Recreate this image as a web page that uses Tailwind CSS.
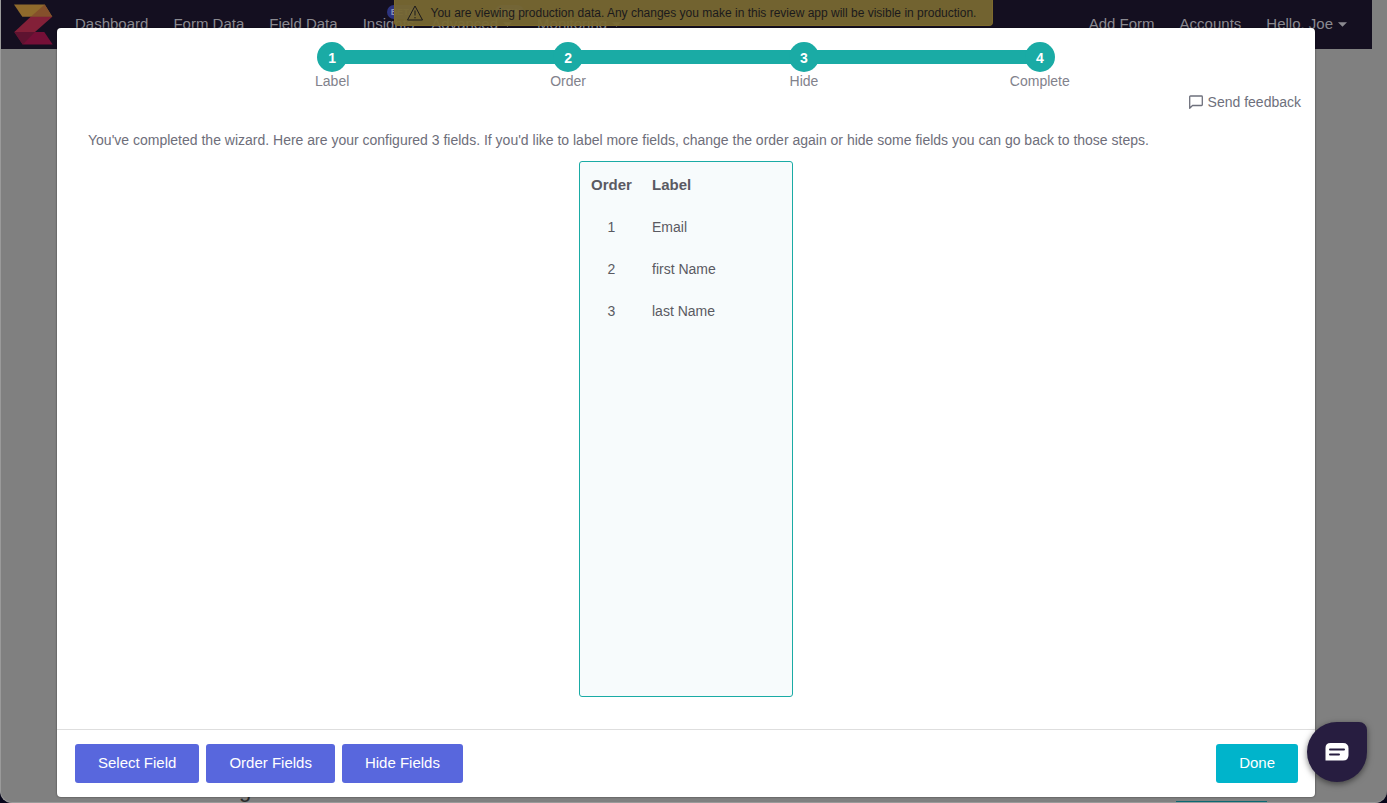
<!DOCTYPE html>
<html lang="en">

<head>
    <meta charset="UTF-8">
    <meta name="viewport" content="width=device-width, initial-scale=1.0">
    <title>Field Wizard</title>
    <script src="https://cdn.jsdelivr.net/npm/@tailwindcss/browser@4"></script>
</head>

<body class="bg-[#07061a] font-['Liberation_Sans',Arial,sans-serif] overflow-hidden">

    <!-- page behind the modal -->
    <div class="relative h-screen overflow-hidden rounded-b-xl border-l border-b border-[#9a9a9a] bg-[#808080] pr-[15px] flex flex-col">
        <nav class="h-[49px] shrink-0 bg-[#140f20] flex items-center justify-between pl-3 pr-[25px] text-[15px] text-[#8b8a90]">
            <div class="flex items-center">
                <a href="#" aria-label="Home" class="mr-[22px]">
                    <svg class="w-10 h-[41px]" viewBox="0 0 40 41">
                        <path d="M1 .5H31.700L39.300 12.700H9.300Z" fill="#8f6a2c" />
                        <path d="M31.700 .5L39.300 12.700H17.700Z" fill="#85502b" />
                        <path d="M17.700 12.700H39.300L22 28H1.300Z" fill="#832038" />
                        <path d="M1.300 28H31.300L39.700 40.500H9.700Z" fill="#750f37" />
                        <path d="M1.300 28H22L9.700 40.500Z" fill="#5e1330" />
                    </svg>
                </a>
                <ul class="flex gap-[25px]">
                    <li><a href="#">Dashboard</a></li>
                    <li><a href="#">Form Data</a></li>
                    <li><a href="#">Field Data</a></li>
                    <li class="relative">
                        <a href="#">Insights</a>
                        <span class="absolute left-6 -top-2 rounded-full bg-[#2d3480] px-1 text-[9px] leading-[14px] font-bold text-[#8b8fb5]">BETA</span>
                    </li>
                    <li class="relative -ml-2">
                        <a href="#" class="flex items-center gap-[5px]">Advanced
                            <svg class="w-[9px] h-[5px]" viewBox="0 0 8 4" fill="currentColor"><path d="M0 0H8L4 4Z" /></svg></a>
                        <span class="absolute left-16 -top-2 rounded-full bg-[#2d3480] px-1 text-[9px] leading-[14px] font-bold text-[#8b8fb5]">NEW</span>
                    </li>
                    <li><a href="#" class="flex items-center gap-[5px]">Monitoring
                            <svg class="w-[9px] h-[5px]" viewBox="0 0 8 4" fill="currentColor"><path d="M0 0H8L4 4Z" /></svg></a></li>
                </ul>
            </div>
            <ul class="flex gap-[25px]">
                <li><a href="#">Add Form</a></li>
                <li><a href="#">Accounts</a></li>
                <li><a href="#" class="flex items-center gap-[5px]">Hello, Joe
                        <svg class="w-[9px] h-[5px]" viewBox="0 0 8 4" fill="currentColor"><path d="M0 0H8L4 4Z" /></svg></a></li>
            </ul>
        </nav>
        <div class="mt-auto flex items-end justify-between pl-[238px] pr-[105px]">
            <p class="text-[22px] leading-6 text-[#2b2b2b]">g</p>
            <div class="h-px w-[91px] bg-[#0b6873]"></div>
        </div>
    </div>

    <!-- production warning -->
    <div class="absolute inset-x-0 top-0 flex justify-center">
        <div class="flex h-[26px] items-center gap-2 rounded-b border border-t-0 border-[#7d6a2c] bg-[#776832]/95 px-3 text-xs text-[#1b1a1c]">
            <svg class="w-4 h-4" viewBox="0 0 16 16" fill="none" stroke="currentColor" stroke-linejoin="round">
                <path d="M8 1L15.500 15H.5Z" />
                <path d="M8 5.500V10.500M8 12V13.300" />
            </svg>
            <p class="pr-1">You are viewing production data. Any changes you make in this review app will be visible in production.</p>
        </div>
    </div>

    <!-- wizard modal -->
    <div class="absolute inset-0 pt-7 pb-[6px] pl-[57px] pr-[72px] flex">
        <div role="dialog" aria-label="Field wizard" class="flex flex-1 flex-col rounded bg-white shadow-[0_0_2px_rgba(0,0,0,0.6)]">
            <ol class="mx-auto mt-[14px] grid w-3/4 grid-cols-4 text-center text-sm leading-[18px] text-[#82828c]">
                <li>
                    <div class="flex items-center">
                        <span class="-mr-1 h-[14px] flex-1"></span>
                        <span class="size-[30px] rounded-full bg-[#1aaba5] pt-px font-bold leading-[30px] text-white">1</span>
                        <span class="-ml-1 h-[14px] flex-1 bg-[#1aaba5]"></span>
                    </div>
                    Label
                </li>
                <li>
                    <div class="flex items-center">
                        <span class="-mr-1 h-[14px] flex-1 bg-[#1aaba5]"></span>
                        <span class="size-[30px] rounded-full bg-[#1aaba5] pt-px font-bold leading-[30px] text-white">2</span>
                        <span class="-ml-1 h-[14px] flex-1 bg-[#1aaba5]"></span>
                    </div>
                    Order
                </li>
                <li>
                    <div class="flex items-center">
                        <span class="-mr-1 h-[14px] flex-1 bg-[#1aaba5]"></span>
                        <span class="size-[30px] rounded-full bg-[#1aaba5] pt-px font-bold leading-[30px] text-white">3</span>
                        <span class="-ml-1 h-[14px] flex-1 bg-[#1aaba5]"></span>
                    </div>
                    Hide
                </li>
                <li>
                    <div class="flex items-center">
                        <span class="-mr-1 h-[14px] flex-1 bg-[#1aaba5]"></span>
                        <span class="size-[30px] rounded-full bg-[#1aaba5] pt-px font-bold leading-[30px] text-white">4</span>
                        <span class="-ml-1 h-[14px] flex-1"></span>
                    </div>
                    Complete
                </li>
            </ol>

            <div class="mt-[2px] flex justify-end pr-[14px]">
                <a href="#" class="flex items-center gap-[5px] text-sm leading-5 text-[#6e707c]">
                    <svg class="w-[14px] h-[14px]" viewBox="0 0 14 14" fill="none" stroke="currentColor" stroke-width="1.300" stroke-linejoin="round">
                        <path d="M1.500 1H12.500Q13.300 1 13.300 1.800V9.700Q13.300 10.500 12.500 10.500H3.500L.7 13.300V1.800Q.7 1 1.500 1Z" />
                    </svg>
                    Send feedback
                </a>
            </div>

            <p class="mt-[18px] px-[31px] text-sm leading-5 text-[#6e6e7a]">You've completed the wizard. Here are your configured 3 fields. If you'd like to label more fields, change the order again or hide some fields you can go back to those steps.</p>

            <div class="mx-auto mt-[11px] mb-8 w-[214px] flex-1 rounded-[3px] border border-[#1aaba5] bg-[#f7fbfc] px-px pt-[2px]">
                <table class="w-full text-sm text-[#5a5a62]">
                    <thead>
                        <tr class="h-[42px] text-[15px]">
                            <th class="w-[61px] px-[10px] text-center">Order</th>
                            <th class="px-[10px] text-left">Label</th>
                        </tr>
                    </thead>
                    <tbody>
                        <tr class="h-[42px]">
                            <td class="text-center">1</td>
                            <td class="px-[10px]">Email</td>
                        </tr>
                        <tr class="h-[42px]">
                            <td class="text-center">2</td>
                            <td class="px-[10px]">first Name</td>
                        </tr>
                        <tr class="h-[42px]">
                            <td class="text-center">3</td>
                            <td class="px-[10px]">last Name</td>
                        </tr>
                    </tbody>
                </table>
            </div>

            <div class="flex items-center justify-between border-t border-[#dedede] pt-[14px] pb-[14px] pl-[18px] pr-[17px] text-[15px] text-white">
                <div class="flex gap-[7px]">
                    <button type="button" class="h-[39px] rounded-[3px] bg-[#5867dd] px-[23px]">Select Field</button>
                    <button type="button" class="h-[39px] rounded-[3px] bg-[#5867dd] px-[23px]">Order Fields</button>
                    <button type="button" class="h-[39px] rounded-[3px] bg-[#5867dd] px-[23px]">Hide Fields</button>
                </div>
                <button type="button" class="h-[39px] rounded-[3px] bg-[#00b4cb] px-[23px]">Done</button>
            </div>
        </div>
    </div>

    <!-- chat launcher -->
    <button type="button" aria-label="Open chat" class="absolute right-5 bottom-[21px] flex size-[60px] items-center justify-center rounded-[30px] rounded-tr-lg bg-[#271d40] shadow-[0_2px_6px_rgba(0,0,0,0.5)]">
        <svg class="w-6 h-[18px]" viewBox="0 0 24 18">
            <path d="M5.500 0H18Q23.500 0 23.500 5.500V12Q23.500 17.500 18 17.500H.5V5Q.5 0 5.500 0Z" fill="#fff" />
            <path d="M5 6.500H19M5 11.500H14" stroke="#271d40" stroke-width="2" stroke-linecap="round" />
        </svg>
    </button>

</body>

</html>
